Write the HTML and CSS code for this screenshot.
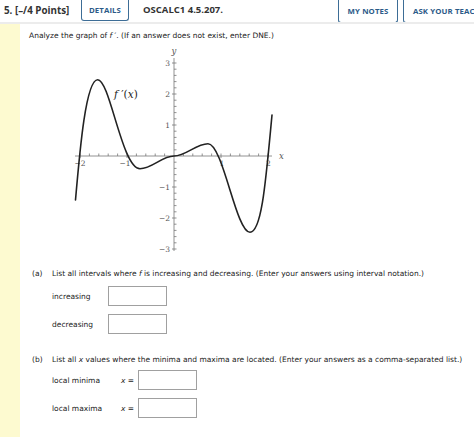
FILE: index.html
```html
<!DOCTYPE html>
<html>
<head>
<meta charset="utf-8">
<link rel="stylesheet" href="styles.css">
</head>
<body>
<div class="header">
  <span class="num">5. [–/4 Points]</span>
  <span class="btn btn-details">DETAILS</span>
  <span class="code">OSCALC1 4.5.207.</span>
  <span class="spacer"></span>
  <span class="btn btn-notes">MY NOTES</span>
  <span class="btn btn-ask">ASK YOUR TEACHER</span>
</div>
<div class="main">
  <div class="stripe"></div>
  <div class="content">
    <p class="prompt">Analyze the graph of <i>f</i> ′. (If an answer does not exist, enter DNE.)</p>
    <svg class="graph" width="230" height="215" viewBox="60 45 230 215">
      <g class="axis">
        <path d="M75,158 H272 M174,60 V253"/>
        <path d="M80,158v-2.5M89.4,158v-2.5M98.8,158v-2.5M108.2,158v-2.5M117.6,158v-2.5M127,158v-2.5M136.4,158v-2.5M145.8,158v-2.5M155.2,158v-2.5M164.6,158v-2.5M183.4,158v-2.5M192.8,158v-2.5M202.2,158v-2.5M211.6,158v-2.5M221,158v-2.5M230.4,158v-2.5M239.8,158v-2.5M249.2,158v-2.5M258.6,158v-2.5M268,158v-2.5"/>
        <path d="M80,158v2M127,158v2M221,158v2M268,158v2"/>
        <path d="M174,71.2h2.5M174,77.4h2.5M174,83.6h2.5M174,89.8h2.5M174,102.2h2.5M174,108.4h2.5M174,114.6h2.5M174,120.8h2.5M174,133.2h2.5M174,139.4h2.5M174,145.6h2.5M174,151.8h2.5M174,164.2h2.5M174,170.4h2.5M174,176.6h2.5M174,182.8h2.5M174,195.2h2.5M174,201.4h2.5M174,207.6h2.5M174,213.8h2.5M174,226.2h2.5M174,232.4h2.5M174,238.6h2.5M174,244.8h2.5"/>
        <path d="M172,65h4.5M172,96h4.5M172,127h4.5M172,189h4.5M172,220h4.5M172,251h4.5"/>
      </g>
      <g class="lbl">
        <text x="170" y="68" text-anchor="end">3</text>
        <text x="170" y="99" text-anchor="end">2</text>
        <text x="170" y="130" text-anchor="end">1</text>
        <text x="170" y="192" text-anchor="end">−1</text>
        <text x="170" y="223" text-anchor="end">−2</text>
        <text x="170" y="254" text-anchor="end">−3</text>
        <text x="80" y="167.5" text-anchor="middle">−2</text>
        <text x="125" y="167.5" text-anchor="middle">−1</text>
        <text x="222" y="167.5" text-anchor="middle">1</text>
        <text x="268.5" y="167.5" text-anchor="middle">2</text>
        <text class="var" x="279" y="161">x</text>
        <text class="var" x="174" y="56" text-anchor="middle">y</text>
      </g>
      <text class="fname" x="114" y="100"><tspan font-style="italic">f</tspan> ′(<tspan font-style="italic">x</tspan>)</text>
      <path class="curve" d="M75.5,202 C80,150 86,81.7 97.7,81.7 C110,81.7 122,170.7 140,170.7 C152,170.7 162,158 174,158 C186,158 196,145.7 208,145.7 C223,145.7 236,234.3 250,234.3 C262,234.3 266,180 272,117"/>
    </svg>

    <div class="part">
      <span class="plabel">(a)</span>
      <span>List all intervals where <i>f</i> is increasing and decreasing. (Enter your answers using interval notation.)</span>
    </div>
    <div class="row row-a"><span class="lab">increasing</span><span class="box"></span></div>
    <div class="row row-a"><span class="lab">decreasing</span><span class="box"></span></div>

    <div class="part part-b">
      <span class="plabel">(b)</span>
      <span>List all <i>x</i> values where the minima and maxima are located. (Enter your answers as a comma-separated list.)</span>
    </div>
    <div class="row row-b"><span class="lab">local minima</span><span class="eq"><i>x</i> =</span><span class="box"></span></div>
    <div class="row row-b"><span class="lab">local maxima</span><span class="eq"><i>x</i> =</span><span class="box"></span></div>
  </div>
</div>
</body>
</html>
```

FILE: styles.css
```css
* { box-sizing: border-box; }
html, body {
  margin: 0;
  padding: 0;
  width: 474px;
  height: 437px;
  overflow: hidden;
  background: #fff;
}
body {
  font-family: "DejaVu Sans", Verdana, sans-serif;
  color: #222;
}
.header {
  display: flex;
  align-items: flex-start;
  height: 24px;
  background: #fff;
  border-bottom: 2px solid #ececec;
  font-family: "Open Sans", sans-serif;
  white-space: nowrap;
  overflow: hidden;
}
.num {
  font-weight: 700;
  font-size: 9.8px;
  color: #333;
  margin: 4px 0 0 4px;
  width: 77px;
}
.code {
  font-weight: 700;
  font-size: 9.5px;
  color: #333;
  margin: 3px 0 0 14px;
}
.spacer { flex: 1; }
.btn {
  display: flex;
  align-items: center;
  justify-content: center;
  border: 1.5px solid #3d6d96;
  border-top: none;
  border-radius: 0 0 3px 3px;
  background: #fff;
  color: #2c5a88;
  font-weight: 700;
  font-size: 7.8px;
  letter-spacing: 0.1px;
}
.btn-details { width: 48px; height: 21px; }
.btn-notes { width: 60px; height: 23px; }
.btn-ask { width: 90px; height: 23px; margin-left: 5px; margin-right: -19px; justify-content: flex-start; padding-left: 9px; }
.main {
  display: flex;
  height: 413px;
}
.stripe {
  width: 20px;
  background: #fdfad0;
  flex: none;
}
.content {
  flex: 1;
  padding-left: 9px;
  font-size: 7.5px;
}
.prompt {
  margin: 7px 0 0 0;
  line-height: 9px;
}
.graph {
  display: block;
  margin: 3px 0 0 31px;
}
.axis path { stroke: #777; stroke-width: 0.8; fill: none; }
.lbl text { font-family: "DejaVu Serif", serif; font-size: 7.5px; fill: #555; }
.lbl .var { font-style: italic; font-size: 8.5px; }
.fname { font-family: "DejaVu Serif", serif; font-size: 10.5px; fill: #222; }
.curve { fill: none; stroke: #222; stroke-width: 1.6; stroke-linecap: round; }
.part {
  display: flex;
  margin: 11px 0 0 3px;
  line-height: 9px;
}
.part-b { margin-top: 21px; }
.plabel { width: 20px; flex: none; }
.row {
  display: flex;
  align-items: center;
  margin-top: 8px;
  padding-left: 23px;
}
.row-b { margin-top: 6px; }
.row-b + .row-b { margin-top: 8px; }
.row-a .lab { width: 56px; }
.row-b .lab { width: 69px; }
.eq { width: 17px; }
.box {
  width: 59px;
  height: 20px;
  border: 1px solid #a0a0a0;
  background: #fff;
}
```
